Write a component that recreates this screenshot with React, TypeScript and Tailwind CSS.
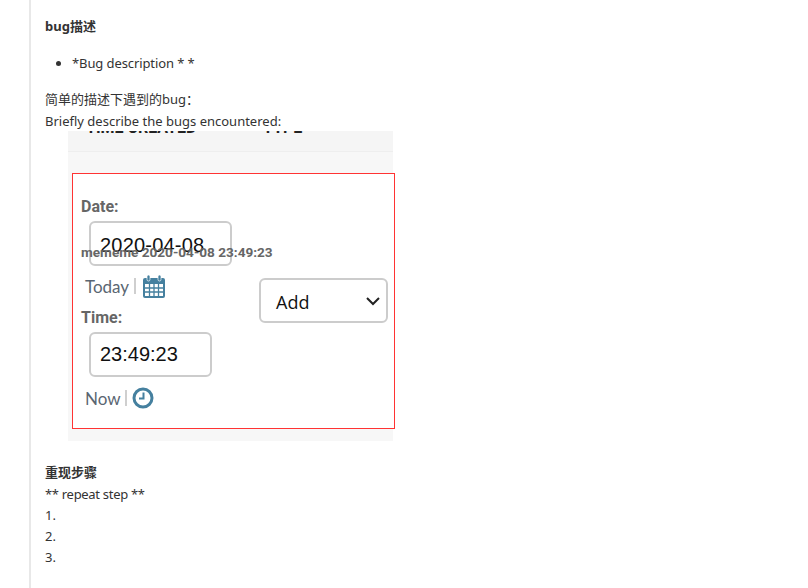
export default function App() {
  return (
    <div className="w-[808px] h-[588px] overflow-hidden bg-white pl-[29px] text-[#333] font-['Noto_Sans','Noto_Sans_CJK_SC',sans-serif] text-[13px] leading-[21px]">
      <div className="h-full border-l-2 border-[#e8e8e8] pl-[14px] pt-[16px]">
        <p className="font-bold">bug描述</p>
        <ul className="mt-[16px] list-disc pl-[27px]">
          <li className="tracking-[-0.1px]">*Bug description * *</li>
        </ul>
        <p className="mt-[15px] h-[22px]">简单的描述下遇到的bug：</p>
        <p className="h-[20px]">Briefly describe the bugs encountered:</p>
        <div className="ml-[23px] h-[310px] w-[325px] bg-[#f7f7f7] relative">
          <div className="relative h-[21px] overflow-hidden border-b border-[#eeeeee] bg-[#f5f5f5] font-['Roboto',sans-serif] text-[16px] font-bold leading-[20px] text-[#222]">
            <div className="mt-[-13px] flex pl-[18px]">
              <span className="w-[177px]">TIME CREATED</span>
              <span>TYPE</span>
            </div>
          </div>
          <div className="ml-[4px] mt-[21px] flex h-[256px] w-[323px] border border-[#ff3333] bg-white font-['Roboto',sans-serif] relative">
            <div className="w-[186px] pl-[8px] pt-[22px]">
              <div className="text-[16px] font-bold leading-[22px] text-[#666]">Date:</div>
              <div className="ml-[8px] mt-[3px] flex h-[45px] w-[143px] items-center rounded-[6px] border-2 border-[#cccccc] pl-[9px] pt-[3px] font-['Liberation_Sans',sans-serif] text-[20px] tracking-[0.2px] text-[#111]">
                2020-04-08
              </div>
              <div className="ml-[4px] mt-[7px] flex h-[26px] items-center text-[17px] text-[#5a6672] font-['Lato',sans-serif]">
                <span>Today</span>
                <span className="ml-[5px] h-[16px] w-[2px] bg-[#cfcfcf]" />
                <svg className="ml-[6px]" width="24" height="25" viewBox="0 0 24 25">
                  <path d="M3 4h18a2 2 0 0 1 2 2v16a2 2 0 0 1-2 2H3a2 2 0 0 1-2-2V6a2 2 0 0 1 2-2z" fill="#45809f" />
                  <rect x="3" y="10" width="18" height="12" fill="#fff" />
                  <path d="M3 14h18M3 18h18M7.500 10v12M12 10v12M16.500 10v12" stroke="#45809f" strokeWidth="1.300" />
                  <rect x="5" y="1" width="3" height="6" rx="1.500" fill="#45809f" stroke="#fff" strokeWidth="0.700" />
                  <rect x="16" y="1" width="3" height="6" rx="1.500" fill="#45809f" stroke="#fff" strokeWidth="0.700" />
                </svg>
              </div>
              <div className="mt-[8px] text-[16px] font-bold leading-[22px] text-[#666]">Time:</div>
              <div className="ml-[8px] mt-[3px] flex h-[45px] w-[123px] items-center rounded-[6px] border-2 border-[#cccccc] pl-[9px] font-['Liberation_Sans',sans-serif] text-[20px] text-[#111]">
                23:49:23
              </div>
              <div className="ml-[4px] mt-[8px] flex h-[26px] items-center text-[17px] text-[#5a6672] font-['Lato',sans-serif]">
                <span>Now</span>
                <span className="ml-[4px] h-[16px] w-[2px] bg-[#cfcfcf]" />
                <svg className="ml-[5px]" width="22" height="22" viewBox="0 0 22 22">
                  <circle cx="11" cy="11" r="9" fill="#fff" stroke="#45809f" strokeWidth="3" />
                  <path d="M11.500 5.500v6H7" fill="none" stroke="#45809f" strokeWidth="2" />
                </svg>
              </div>
            </div>
            <div className="pt-[104px]">
              <div className="flex h-[45px] w-[129px] items-center justify-between rounded-[6px] border-2 border-[#cccccc] pl-[15px] pr-[5px] font-['Open_Sans',sans-serif] text-[18px] text-[#111]">
                <span className="pt-[3px]">Add</span>
                <svg width="16" height="16" viewBox="0 0 16 16">
                  <path d="M2 5l6 6 6-6" fill="none" stroke="#222" strokeWidth="2" />
                </svg>
              </div>
            </div>
            <div className="absolute left-[8px] top-[68px] whitespace-nowrap text-[13.6px] font-bold leading-[20px] text-[#666]">
              mememe 2020-04-08 23:49:23
            </div>
          </div>
        </div>
        <p className="mt-[21px] font-bold">重现步骤</p>
        <p className="mt-[1px] tracking-[-0.3px]">** repeat step **</p>
        <p>1.</p>
        <p>2.</p>
        <p>3.</p>
      </div>
    </div>
  );
}
